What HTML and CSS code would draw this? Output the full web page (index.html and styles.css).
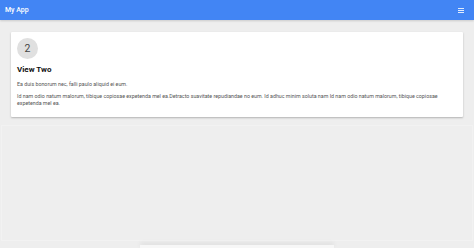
FILE: index.html
```html
<!DOCTYPE html>
<html>
<head>
<meta charset="utf-8">
<link rel="stylesheet" href="styles.css">
</head>
<body>
<header class="bar">
  <span class="title">My App</span>
  <svg class="menu" width="6" height="5" viewBox="0 0 6 5"><rect x="0" y="0" width="6" height="1" fill="#fff"/><rect x="0" y="2" width="6" height="1" fill="#fff"/><rect x="0" y="4" width="6" height="1" fill="#fff"/></svg>
</header>
<main class="content">
  <section class="card">
    <div class="badge">2</div>
    <h1 class="heading">View Two</h1>
    <p class="text">Ea duis bonorum nec, falli paulo aliquid ei eum.</p>
    <p class="text">Id nam odio natum malorum, tibique copiosae expetenda mel ea.Detracto suavitate repudiandae no eum. Id adhuc minim soluta nam Id nam odio natum malorum, tibique copiosae expetenda mel ea.</p>
  </section>
  <div class="frame"></div>
</main>
<div class="sheet"></div>
</body>
</html>
```
FILE: styles.css
```css
html, body {
  margin: 0;
  padding: 0;
  height: 100%;
  overflow: hidden;
}
body {
  background: #eeeeee;
  font-family: Roboto, "Liberation Sans", sans-serif;
  color: #212121;
}
.bar {
  height: 20px;
  background: #4285f4;
  display: flex;
  align-items: center;
  justify-content: space-between;
  padding: 0 10px 0 5px;
  box-shadow: 0 1px 2px rgba(0,0,0,0.15);
}
.title {
  color: #fff;
  font-size: 7px;
  font-weight: 500;
}
.menu {
  display: block;
  opacity: 0.85;
}
.content {
  padding: 12px 11px 0 11px;
}
.card {
  background: #fff;
  padding: 6px 6px 10px 6px;
  box-shadow: 0 1px 2px rgba(0,0,0,0.25);
  border-radius: 1px;
}
.badge {
  width: 21px;
  height: 21px;
  border-radius: 50%;
  background: #e0e0e0;
  color: #444;
  font-size: 10.5px;
  display: flex;
  align-items: center;
  justify-content: center;
}
.heading {
  margin: 5px 0 0 0;
  font-size: 8px;
  font-weight: 700;
  color: #111;
  line-height: 12px;
}
.text {
  margin: 5px 0 0 0;
  font-size: 5.3px;
  line-height: 7px;
  color: #555;
}
.frame {
  margin: 8px -10px 0 -10px;
  height: 114px;
  border: 1px solid #f2f2f2;
}
.sheet {
  position: fixed;
  left: 140px;
  width: 194px;
  bottom: 0;
  height: 3px;
  background: #f7f7f7;
  box-shadow: 0 -2px 4px rgba(0,0,0,0.08);
}
```
